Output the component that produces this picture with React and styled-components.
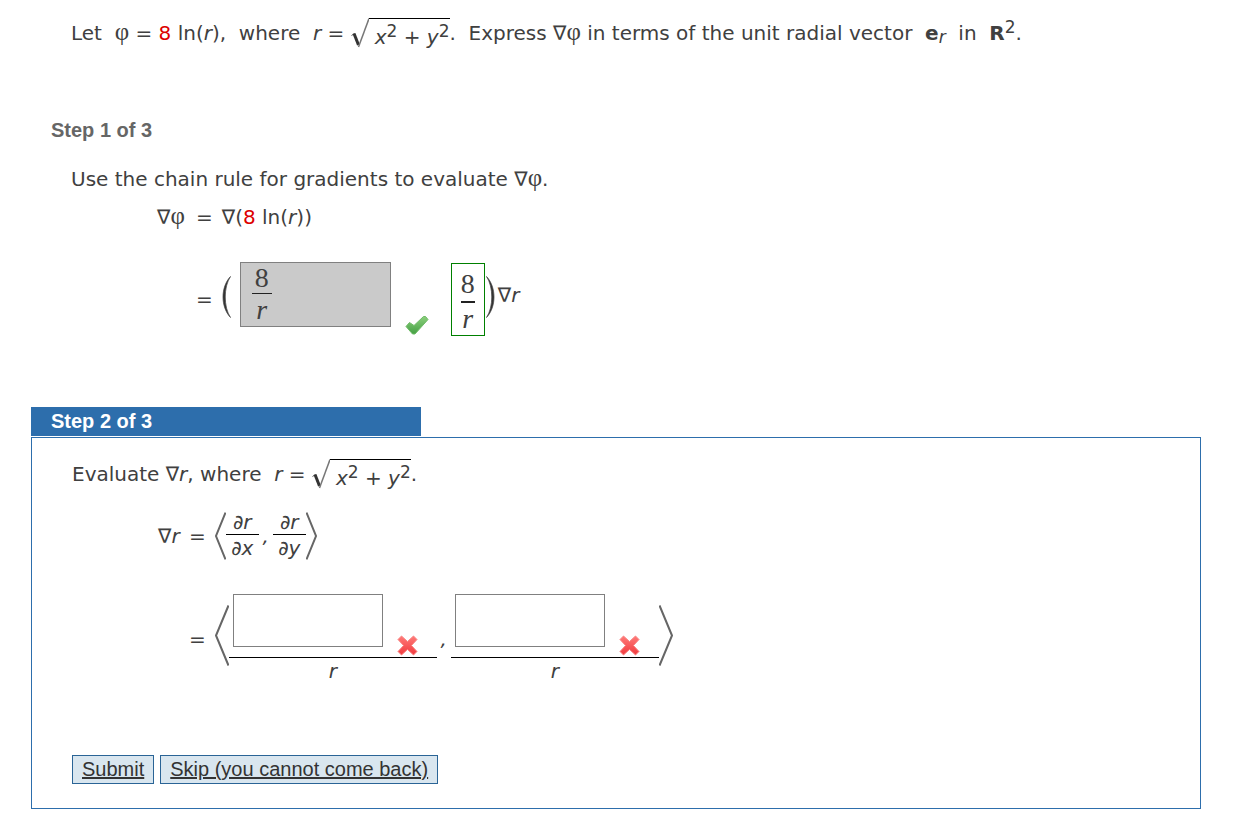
import React from "react";
import styled, { createGlobalStyle } from "styled-components";

const GlobalStyle = createGlobalStyle`
  body {
    margin: 0;
    background: white;
    color: #404040;
    font-family: Verdana, "DejaVu Sans", sans-serif;
    font-size: 20px;
  }
`;

const Page = styled.main`
  padding: 18px 46px 23px 31px;
`;

const Paragraph = styled.p`
  margin: 0;
  line-height: 30px;

  & sup,
  & sub {
    font-size: 17px;
    line-height: 0;
  }

  & sup {
    vertical-align: 7px;
  }

  & sub {
    vertical-align: -3px;
  }
`;

const Question = styled(Paragraph)`
  padding-left: 40px;
`;

const Red = styled.span`
  color: #dd0000;
`;

const Greek = styled.span`
  font-family: "Liberation Serif", serif;
  font-size: 25px;
  line-height: 0;
`;

const StyledRoot = styled.span`
  display: inline-flex;
  vertical-align: top;
  height: 30px;

  & svg {
    flex: none;
  }
`;

const Radicand = styled.span`
  border-top: 1px solid black;
  padding-left: 6px;
  line-height: 36px;
`;

const StepTitle = styled.h2`
  margin: 67px 0 19px;
  padding-left: 20px;
  font-family: Arial, "Liberation Sans", sans-serif;
  font-size: 20px;
  line-height: 30px;
  color: #666666;
`;

const ActiveTitle = styled(StepTitle)`
  margin: 71px 0 1px;
  max-width: 370px;
  line-height: 29px;
  background: #2d6eac;
  color: white;
`;

const StepBody = styled.section`
  padding-left: 40px;
`;

const Panel = styled.section`
  border: 1px solid #2d6eac;
  padding: 21px 40px 24px;
`;

const Equation = styled.div`
  display: flex;
  align-items: center;
  margin-top: ${(props) => props.$space}px;
  padding-left: 86px;
  line-height: 30px;
`;

const Lhs = styled.span`
  min-width: ${(props) => props.$width}px;
`;

const Equals = styled.span`
  margin-right: 9px;
`;

const Factor = styled.span`
  padding: 0 0 8px 3px;
`;

const Delimiter = styled.svg`
  flex: none;
  margin-bottom: ${(props) => props.$lift || 0}px;
  fill: none;
  stroke: #444444;
`;

const Fraction = styled.span`
  display: flex;
  flex-direction: column;
  min-width: 33px;
  text-align: center;
`;

const Numerator = styled.span`
  border-bottom: 1px solid black;
  line-height: 24px;
`;

const Denominator = styled.span`
  line-height: 26px;
`;

const Comma = styled.span`
  width: 14px;
  text-align: center;
`;

const AnswerNumerator = styled(Numerator)`
  display: flex;
  align-items: flex-end;
  gap: 14px;
  padding: 0 18px 0 4px;
`;

const AnswerInput = styled.input`
  box-sizing: border-box;
  width: 150px;
  height: 53px;
  margin: 0 0 10px;
  padding: 0 10px;
  border: 1px solid #808080;
  background: white;
  color: #404040;
  font: inherit;
`;

const GradedAnswer = styled.div`
  box-sizing: border-box;
  align-self: flex-start;
  width: 151px;
  height: 65px;
  margin: 0 14px 0 9px;
  padding-left: 11px;
  border: 1px solid #808080;
  background: #cacaca;
`;

const AnswerKey = styled.div`
  box-sizing: border-box;
  margin: 1px 1px 0 22px;
  padding: 3px 9px;
  height: 73px;
  border: 1px solid #008000;
`;

const SerifFraction = styled.span`
  display: inline-flex;
  flex-direction: column;
  text-align: center;
  font-family: "Liberation Serif", serif;
  font-size: 28px;
  line-height: 32px;

  & span {
    border-bottom: ${(props) => props.$rule}px solid #222222;
    padding: 0 ${(props) => props.$overhang}px;
    line-height: ${(props) => props.$top}px;
  }
`;

const CheckSvg = styled.svg`
  flex: none;
  align-self: flex-end;
`;

const Actions = styled.div`
  display: flex;
  flex-wrap: wrap;
  gap: 6px;
  margin-top: 71px;
`;

const ActionButton = styled.button`
  padding: 0 9px;
  border: 1px solid #2a6496;
  background: #d9e6ef;
  color: #333333;
  font-family: Arial, "Liberation Sans", sans-serif;
  font-size: 20px;
  line-height: 27px;
  text-decoration: underline;
  cursor: pointer;
`;

const Root = () => {
  return (
    <StyledRoot>
      <svg width="18" height="30" viewBox="0 0 18 30" fill="none">
        <path d="M0.5 17.5 L3.5 15.5" stroke="#555555" />
        <path d="M3 15.5 L7.5 27" stroke="#333333" strokeWidth="3" />
        <path d="M7.5 29 L18 0.5" stroke="#777777" strokeWidth="1.5" />
      </svg>
      <Radicand>
        <i>x</i>
        <sup>2</sup> + <i>y</i>
        <sup>2</sup>
      </Radicand>
    </StyledRoot>
  );
};

const Paren = (props) => {
  return (
    <Delimiter $lift={4} width="9" height="42" viewBox="0 0 9 42">
      {props.right ? (
        <path
          d="M0.5 0.5 C10.5 11 10.5 31 0.5 41.5 C7.5 31 7.5 11 0.5 0.5"
          fill="#333333"
          strokeWidth="0.7"
        />
      ) : (
        <path
          d="M8.5 0.5 C-1.5 11 -1.5 31 8.5 41.5 C1.5 31 1.5 11 8.5 0.5"
          fill="#333333"
          strokeWidth="0.7"
        />
      )}
    </Delimiter>
  );
};

const Angle = (props) => {
  const { width, height, right, lift } = props;
  const tip = right ? width - 1 : 1;
  const end = right ? 0.5 : width - 0.5;
  return (
    <Delimiter
      $lift={lift}
      width={width}
      height={height}
      viewBox={`0 0 ${width} ${height}`}
    >
      <path
        d={`M${end} 0.5 L${tip} ${height / 2} L${end} ${height - 0.5}`}
        stroke="#666666"
        strokeWidth="2"
      />
    </Delimiter>
  );
};

const CheckIcon = () => {
  return (
    <CheckSvg width="24" height="21" viewBox="0 0 24 21">
      <defs>
        <linearGradient id="check" x1="0" y1="0" x2="0" y2="1">
          <stop offset="0" stopColor="#8bcf7c" />
          <stop offset="1" stopColor="#45a044" />
        </linearGradient>
      </defs>
      <path
        d="M1 11.5 L4.5 7.5 L9 10.5 L18.5 1.5 L20.5 1.5 L23 4.5 L10 19 L7.5 19 Z"
        fill="url(#check)"
        stroke="#6fbb67"
        strokeWidth="1"
        strokeLinejoin="round"
      />
    </CheckSvg>
  );
};

const CrossIcon = () => {
  return (
    <svg width="22" height="22" viewBox="0 0 22 22">
      <defs>
        <linearGradient id="cross" x1="0" y1="0" x2="0" y2="1">
          <stop offset="0" stopColor="#ff7a78" />
          <stop offset="1" stopColor="#f03a3e" />
        </linearGradient>
      </defs>
      <path
        d="M4.5 1 L10.5 6.5 L16.5 1 L20 4.5 L14.5 10.5 L20 16.5 L16.5 20 L10.5 14.5 L4.5 20 L1 16.5 L6.5 10.5 L1 4.5 Z"
        fill="url(#cross)"
        stroke="#fa8583"
        strokeWidth="1"
        strokeLinejoin="round"
      />
    </svg>
  );
};

const AnswerFraction = (props) => {
  return (
    <Fraction>
      <AnswerNumerator>
        <AnswerInput type="text" aria-label={props.label} />
        <CrossIcon />
      </AnswerNumerator>
      <Denominator>
        <i>r</i>
      </Denominator>
    </Fraction>
  );
};

const Partial = (props) => {
  return (
    <Fraction>
      <Numerator>
        <i>∂r</i>
      </Numerator>
      <Denominator>
        <i>∂{props.by}</i>
      </Denominator>
    </Fraction>
  );
};

const App = () => {
  return (
    <Page>
      <GlobalStyle />
      <Question>
        Let&nbsp; <Greek>φ</Greek> = <Red>8</Red> ln(<i>r</i>),&nbsp; where&nbsp;{" "}
        <i>r</i> = <Root />.&nbsp; Express ∇<Greek>φ</Greek> in terms of the
        unit radial vector&nbsp; <b>e</b>
        <sub>
          <i>r</i>
        </sub>
        &nbsp; in&nbsp; <b>R</b>
        <sup>2</sup>.
      </Question>

      <StepTitle>Step 1 of 3</StepTitle>
      <StepBody>
        <Paragraph>
          Use the chain rule for gradients to evaluate ∇<Greek>φ</Greek>.
        </Paragraph>
        <Equation $space={8}>
          <Lhs $width={39}>
            ∇<Greek>φ</Greek>
          </Lhs>
          <Equals>=</Equals>
          <span>
            ∇(<Red>8</Red> ln(<i>r</i>))
          </span>
        </Equation>
        <Equation $space={30}>
          <Lhs $width={39} />
          <Equals>=</Equals>
          <Paren />
          <GradedAnswer>
            <SerifFraction $rule={1} $top={30} $overhang={3}>
              <span>8</span>
              <i>r</i>
            </SerifFraction>
          </GradedAnswer>
          <CheckIcon />
          <AnswerKey>
            <SerifFraction $rule={2} $top={34} $overhang={0}>
              <span>8</span>
              <i>r</i>
            </SerifFraction>
          </AnswerKey>
          <Paren right />
          <Factor>
            ∇<i>r</i>
          </Factor>
        </Equation>
      </StepBody>

      <ActiveTitle>Step 2 of 3</ActiveTitle>
      <Panel>
        <Paragraph>
          Evaluate ∇<i>r</i>, where&nbsp; <i>r</i> = <Root />.
        </Paragraph>
        <Equation $space={21}>
          <Lhs $width={31}>
            ∇<i>r</i>
          </Lhs>
          <Equals>=</Equals>
          <Angle width={11} height={48} />
          <Partial by="x" />
          <Comma>
            <i>,</i>
          </Comma>
          <Partial by="y" />
          <Angle width={11} height={48} right />
        </Equation>
        <Equation $space={33}>
          <Lhs $width={31} />
          <Equals>=</Equals>
          <Angle width={14} height={61} lift={8} />
          <AnswerFraction label="x component numerator" />
          <Comma>
            <i>,</i>
          </Comma>
          <AnswerFraction label="y component numerator" />
          <Angle width={14} height={61} lift={8} right />
        </Equation>
        <Actions>
          <ActionButton type="button">Submit</ActionButton>
          <ActionButton type="button">Skip (you cannot come back)</ActionButton>
        </Actions>
      </Panel>
    </Page>
  );
};

export default App;
